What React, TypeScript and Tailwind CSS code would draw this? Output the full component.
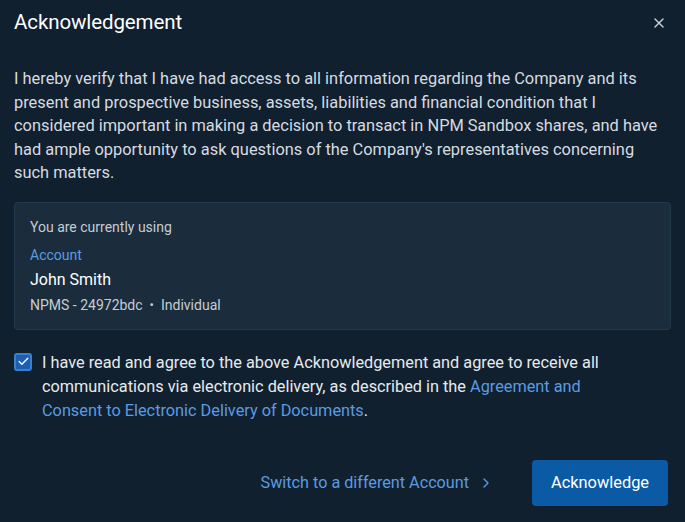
import React, { useState } from "react";
import { X, ChevronRight, Check } from "lucide-react";

export default function App() {
  const [agreed, setAgreed] = useState(true);

  return (
    <div className="w-[685px] h-[522px] bg-[#11202f] text-[#e3e7eb] font-['Roboto',sans-serif] overflow-hidden">
      {/* Header */}
      <div className="flex items-center justify-between pl-[14px] pr-[18px] pt-[11px] h-[34px]">
        <h1 className="text-[20.5px] font-normal tracking-[-0.1px] text-white">Acknowledgement</h1>
        <X className="w-[16px] h-[16px] text-[#c9d0d6]" strokeWidth={2} />
      </div>

      {/* Body */}
      <div className="px-[14px] pt-[33px]">
        <p className="text-[16.4px] leading-[23.6px] text-[#d6dbe0] pr-[6px]">
          I hereby verify that I have had access to all information regarding the Company and its present and prospective business, assets, liabilities and financial condition that I considered important in making a decision to transact in NPM Sandbox shares, and have had ample opportunity to ask questions of the Company's representatives concerning such matters.
        </p>

        {/* Account card */}
        <div className="mt-[17px] h-[128px] rounded-[4px] border border-[#233a4d] bg-[#1b2d3d] px-[15px] pt-[15px]">
          <div className="text-[14px] leading-[18px] text-[#c4ccd3]">You are currently using</div>
          <div className="mt-[10px] text-[14px] leading-[18px] text-[#5b9be0]">Account</div>
          <div className="mt-[6px] text-[16px] leading-[20px] text-white">John Smith</div>
          <div className="mt-[6px] flex items-center gap-[7px] text-[14px] leading-[18px] text-[#c4ccd3]">
            <span>NPMS - 24972bdc</span>
            <span className="text-[13px]">•</span>
            <span>Individual</span>
          </div>
        </div>

        {/* Checkbox */}
        <div className="mt-[21px] flex items-start gap-[10px]">
          <button
            onClick={() => setAgreed(!agreed)}
            className="mt-[2px] flex-none w-[18px] h-[18px] rounded-[3px] border-2 border-[#3b7fd0] bg-[#1d5fae] flex items-center justify-center"
          >
            {agreed && <Check className="w-[13px] h-[13px] text-white" strokeWidth={2.5} />}
          </button>
          <p className="text-[16.3px] leading-[24px] text-[#e6eaee] pr-[60px]">
            I have read and agree to the above Acknowledgement and agree to receive all communications via electronic delivery, as described in the{" "}
            <a className="text-[#5b9be0]">Agreement and Consent to Electronic Delivery of Documents</a>.
          </p>
        </div>

        {/* Footer */}
        <div className="mt-[37px] flex items-center justify-end gap-[38px] pr-[3px]">
          <a className="flex items-center gap-[9px] text-[16.2px] text-[#5b9be0]">
            Switch to a different Account
            <ChevronRight className="w-[16px] h-[16px]" strokeWidth={2} />
          </a>
          <button className="w-[136px] h-[46px] rounded-[4px] bg-[#0b5aa6] text-[16.4px] text-white">
            Acknowledge
          </button>
        </div>
      </div>
    </div>
  );
}
